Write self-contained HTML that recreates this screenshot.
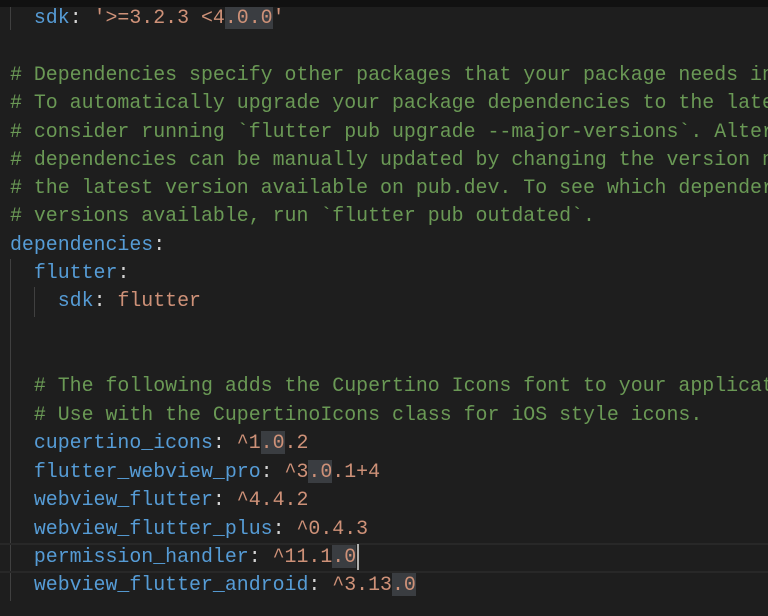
<!DOCTYPE html><html><head><style>
body{margin:0;background:#1e1e1e;width:768px;height:614px;overflow:hidden;position:relative;font-family:"Liberation Mono",monospace;font-size:19.9px}
.l{position:absolute;left:10px;height:28.35px;line-height:28.35px;white-space:pre;color:#d4d4d4}
.k{color:#569cd6}.s{color:#ce9178}.c{color:#6a9955}
.h{background:#3a3d41}
.g{position:absolute;width:1px;background:#404040}
#w{position:absolute;left:0;top:1.5px;width:768px;height:614px}
</style></head><body>
<div id="w">
<div class="g" style="left:10px;top:-2px;height:30px"></div>
<div class="g" style="left:10px;top:257px;height:342px"></div>
<div class="g" style="left:34px;top:285px;height:30px"></div>
<div style="position:absolute;left:0;top:541px;width:768px;height:26px;border-top:2px solid #282828;border-bottom:2px solid #282828"></div>
<div class="l" style="top:2px">  <span class="k">sdk</span>: <span class="s">'&gt;=3.2.3 &lt;4<span class="h">.0.0</span>'</span></div>
<div class="l c" style="top:59px"># Dependencies specify other packages that your package needs in</div>
<div class="l c" style="top:87px"># To automatically upgrade your package dependencies to the late</div>
<div class="l c" style="top:116px"># consider running `flutter pub upgrade --major-versions`. Alter</div>
<div class="l c" style="top:144px"># dependencies can be manually updated by changing the version n</div>
<div class="l c" style="top:172px"># the latest version available on pub.dev. To see which depender</div>
<div class="l c" style="top:200px"># versions available, run `flutter pub outdated`.</div>
<div class="l" style="top:229px"><span class="k">dependencies</span>:</div>
<div class="l" style="top:257px">  <span class="k">flutter</span>:</div>
<div class="l" style="top:285px">    <span class="k">sdk</span>: <span class="s">flutter</span></div>
<div class="l c" style="top:370px">  # The following adds the Cupertino Icons font to your applicat</div>
<div class="l c" style="top:399px">  # Use with the CupertinoIcons class for iOS style icons.</div>
<div class="l" style="top:427px">  <span class="k">cupertino_icons</span>: <span class="s">^1<span class="h">.0</span>.2</span></div>
<div class="l" style="top:456px">  <span class="k">flutter_webview_pro</span>: <span class="s">^3<span class="h">.0</span>.1+4</span></div>
<div class="l" style="top:484px">  <span class="k">webview_flutter</span>: <span class="s">^4.4.2</span></div>
<div class="l" style="top:513px">  <span class="k">webview_flutter_plus</span>: <span class="s">^0.4.3</span></div>
<div class="l" style="top:541px">  <span class="k">permission_handler</span>: <span class="s">^11.1<span class="h">.0</span></span></div>
<div style="position:absolute;left:357px;top:542px;width:2px;height:26px;background:#aeafad"></div>
<div class="l" style="top:569px">  <span class="k">webview_flutter_android</span>: <span class="s">^3.13<span class="h">.0</span></span></div>
</div>
<div style="position:absolute;left:0;top:0;width:768px;height:7px;background:#111"></div>
</body></html>
